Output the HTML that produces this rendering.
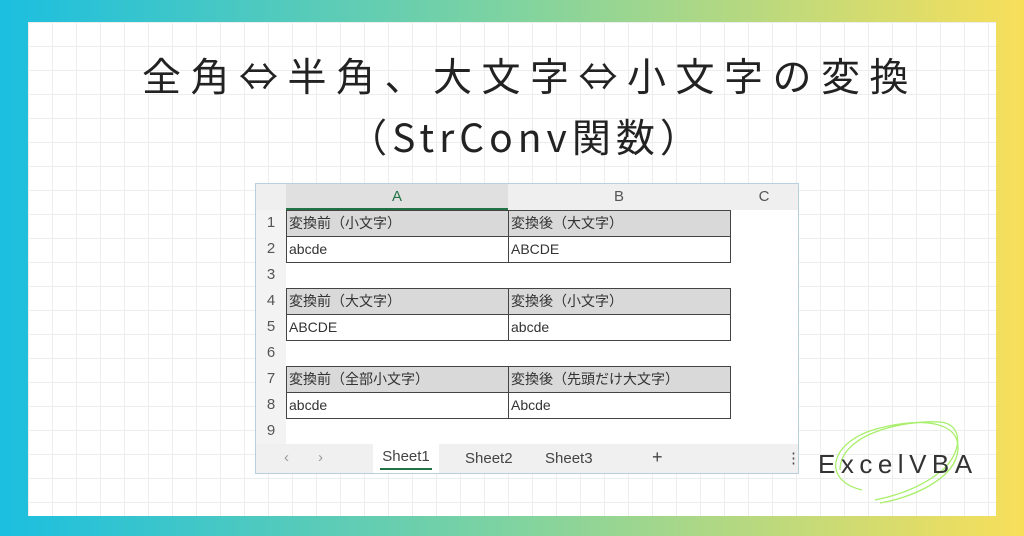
<!DOCTYPE html><html><head><meta charset="utf-8"><style>
body{margin:0;width:1024px;height:536px;overflow:hidden;background:linear-gradient(90deg,#1bbfe0 0%,#7fd3a0 50%,#f8df5a 100%);font-family:"Liberation Sans","Noto Sans CJK JP",sans-serif}
.in{position:absolute;left:28px;top:22px;width:968px;height:494px;background-color:#fff;background-image:linear-gradient(#eceeee 1px,transparent 1px),linear-gradient(90deg,#eceeee 1px,transparent 1px);background-size:24px 24px}
.t{position:absolute;left:18px;width:1024px;text-align:center;font-size:39px;color:#222;letter-spacing:9.5px;font-family:"Noto Sans CJK JP",sans-serif}
.sh{position:absolute;left:255px;top:183px;width:542px;height:289px;background:#fff;border:1px solid #b8cfe0;font-size:14px;color:#333}
.a{position:absolute;box-sizing:border-box}
.hd{background:#efefef;color:#555;text-align:center;line-height:26px;font-size:15px}
.rn{left:0;width:30px;text-align:center;color:#555;line-height:26px;background:#f3f3f3;font-size:15px}
.c{line-height:24px;padding-left:2px;border:1px solid #444;font-family:"Liberation Sans","Noto Sans CJK JP",sans-serif;font-size:14px}
.g{background:#d9d9d9}
</style></head><body><div class="in"></div>
<div class="t" style="top:47px">全角⇔半角、大文字⇔小文字の変換</div>
<div class="t" style="top:108px;letter-spacing:5px;left:14px">（StrConv関数）</div>
<div class="sh">
<div class="a hd" style="left:0;top:0;width:30px;height:26px;background:#efefef"></div>
<div class="a hd" style="left:30px;top:0;width:222px;height:26px;background:#e0e0e0;border-bottom:2px solid #217346;color:#217346">A</div>
<div class="a hd" style="left:252px;top:0;width:222px;height:26px">B</div>
<div class="a hd" style="left:474px;top:0;width:68px;height:26px">C</div>
<div class="a rn" style="top:26px">1</div><div class="a rn" style="top:52px">2</div><div class="a rn" style="top:78px">3</div><div class="a rn" style="top:104px">4</div><div class="a rn" style="top:130px">5</div><div class="a rn" style="top:156px">6</div><div class="a rn" style="top:182px">7</div><div class="a rn" style="top:208px">8</div><div class="a rn" style="top:234px">9</div>
<div class="a c g" style="left:30px;top:26px;width:223px;height:27px">変換前（小文字）</div>
<div class="a c g" style="left:252px;top:26px;width:223px;height:27px">変換後（大文字）</div>
<div class="a c" style="left:30px;top:52px;width:223px;height:27px">abcde</div>
<div class="a c" style="left:252px;top:52px;width:223px;height:27px">ABCDE</div>
<div class="a c g" style="left:30px;top:104px;width:223px;height:27px">変換前（大文字）</div>
<div class="a c g" style="left:252px;top:104px;width:223px;height:27px">変換後（小文字）</div>
<div class="a c" style="left:30px;top:130px;width:223px;height:27px">ABCDE</div>
<div class="a c" style="left:252px;top:130px;width:223px;height:27px">abcde</div>
<div class="a c g" style="left:30px;top:182px;width:223px;height:27px">変換前（全部小文字）</div>
<div class="a c g" style="left:252px;top:182px;width:223px;height:27px">変換後（先頭だけ大文字）</div>
<div class="a c" style="left:30px;top:208px;width:223px;height:27px">abcde</div>
<div class="a c" style="left:252px;top:208px;width:223px;height:27px">Abcde</div>
<div class="a" style="left:0;top:260px;width:542px;height:29px;background:#f0f0f0;font-size:15px;color:#444">
<span class="a" style="left:28px;top:5px;color:#999">‹</span><span class="a" style="left:62px;top:5px;color:#999">›</span>
<div class="a" style="left:117px;top:0;width:66px;height:29px;background:#fff;text-align:center;line-height:26px">Sheet1<div style="position:absolute;left:7px;right:7px;bottom:3px;height:2px;background:#217346"></div></div>
<span class="a" style="left:209px;top:6px">Sheet2</span><span class="a" style="left:289px;top:6px">Sheet3</span>
<span class="a" style="left:396px;top:3px;font-size:18px">+</span><span class="a" style="left:530px;top:5px">⋮</span></div>
</div>
<svg style="position:absolute;left:800px;top:410px" width="200" height="100"><g fill="none" stroke="#a8ef6a" stroke-width="1.3"><path d="M62 80 C20 70 30 30 80 18 C120 8 160 10 158 40 C155 70 110 88 80 93"/><path d="M40 60 C40 25 100 10 140 12 C165 14 162 45 140 62 C120 78 95 86 75 90"/></g></svg>
<div style="position:absolute;left:818px;top:449px;font-size:26px;letter-spacing:5.5px;color:#333">ExcelVBA</div>
</body></html>
